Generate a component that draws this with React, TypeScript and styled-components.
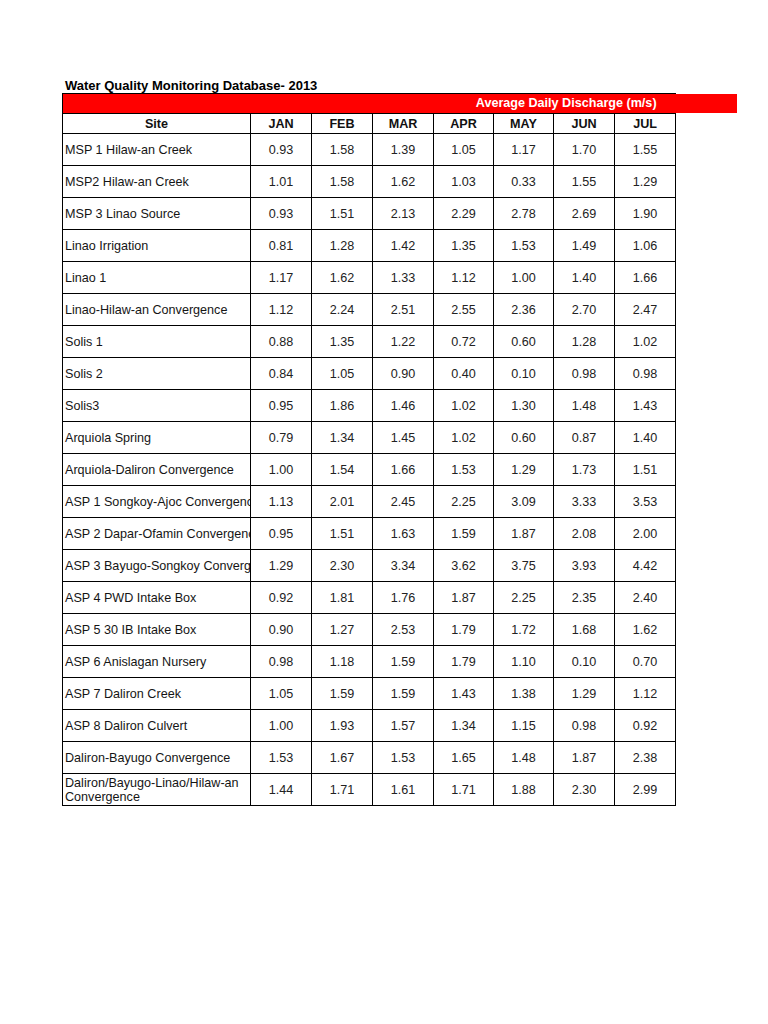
import styled, { createGlobalStyle } from "styled-components";

const GlobalStyle = createGlobalStyle`
  html, body {
    margin: 0;
    padding: 0;
    background: #ffffff;
  }
  body {
    font-family: "Liberation Sans", Arial, sans-serif;
    color: #000;
  }
`;

const months = ["JAN", "FEB", "MAR", "APR", "MAY", "JUN", "JUL"];

const rows: [string, string[]][] = [
  ["MSP 1 Hilaw-an Creek", ["0.93", "1.58", "1.39", "1.05", "1.17", "1.70", "1.55"]],
  ["MSP2 Hilaw-an Creek", ["1.01", "1.58", "1.62", "1.03", "0.33", "1.55", "1.29"]],
  ["MSP 3 Linao Source", ["0.93", "1.51", "2.13", "2.29", "2.78", "2.69", "1.90"]],
  ["Linao Irrigation", ["0.81", "1.28", "1.42", "1.35", "1.53", "1.49", "1.06"]],
  ["Linao 1", ["1.17", "1.62", "1.33", "1.12", "1.00", "1.40", "1.66"]],
  ["Linao-Hilaw-an Convergence", ["1.12", "2.24", "2.51", "2.55", "2.36", "2.70", "2.47"]],
  ["Solis 1", ["0.88", "1.35", "1.22", "0.72", "0.60", "1.28", "1.02"]],
  ["Solis 2", ["0.84", "1.05", "0.90", "0.40", "0.10", "0.98", "0.98"]],
  ["Solis3", ["0.95", "1.86", "1.46", "1.02", "1.30", "1.48", "1.43"]],
  ["Arquiola Spring", ["0.79", "1.34", "1.45", "1.02", "0.60", "0.87", "1.40"]],
  ["Arquiola-Daliron Convergence", ["1.00", "1.54", "1.66", "1.53", "1.29", "1.73", "1.51"]],
  ["ASP 1 Songkoy-Ajoc Convergence", ["1.13", "2.01", "2.45", "2.25", "3.09", "3.33", "3.53"]],
  ["ASP 2 Dapar-Ofamin Convergence", ["0.95", "1.51", "1.63", "1.59", "1.87", "2.08", "2.00"]],
  ["ASP 3 Bayugo-Songkoy Convergence", ["1.29", "2.30", "3.34", "3.62", "3.75", "3.93", "4.42"]],
  ["ASP 4 PWD Intake Box", ["0.92", "1.81", "1.76", "1.87", "2.25", "2.35", "2.40"]],
  ["ASP 5 30 IB Intake Box", ["0.90", "1.27", "2.53", "1.79", "1.72", "1.68", "1.62"]],
  ["ASP 6 Anislagan Nursery", ["0.98", "1.18", "1.59", "1.79", "1.10", "0.10", "0.70"]],
  ["ASP 7 Daliron Creek", ["1.05", "1.59", "1.59", "1.43", "1.38", "1.29", "1.12"]],
  ["ASP 8 Daliron Culvert", ["1.00", "1.93", "1.57", "1.34", "1.15", "0.98", "0.92"]],
  ["Daliron-Bayugo Convergence", ["1.53", "1.67", "1.53", "1.65", "1.48", "1.87", "2.38"]],
  ["Daliron/Bayugo-Linao/Hilaw-an Convergence", ["1.44", "1.71", "1.61", "1.71", "1.88", "2.30", "2.99"]],
];

const Page = styled.div`
  padding: 79px 0 0 62px;
`;

const Title = styled.div`
  font-weight: bold;
  font-size: 13px;
  line-height: 14px;
  height: 14px;
  padding-left: 3px;
  white-space: nowrap;
`;

const Sheet = styled.div`
  display: flex;
  align-items: flex-start;
`;

const Overflow = styled.div`
  width: 61px;
  height: 19px;
  margin-top: 1px;
  background: #ff0000;
`;

const Table = styled.table`
  border-collapse: collapse;
  table-layout: fixed;
  width: 613px;
`;

const Col = styled.col<{ $w: number }>`
  width: ${(p) => p.$w}px;
`;

const BandCell = styled.td`
  background: #ff0000;
  color: #ffffff;
  font-weight: bold;
  font-size: 12.6px;
  height: 19px;
  padding: 0 19px 0 0;
  text-align: right;
  border-top: 1px solid #000;
  border-left: 1px solid #000;
  line-height: 19px;
`;

const HeadCell = styled.th`
  height: 19px;
  padding: 0;
  border: 1px solid #000;
  font-size: 12.6px;
  font-weight: bold;
  text-align: center;
  vertical-align: middle;
  line-height: 14px;
  color: #111;
`;

const SiteCell = styled.td<{ $wrap?: boolean }>`
  height: 31px;
  padding: 0 0 0 2px;
  border: 1px solid #000;
  font-size: 12.6px;
  line-height: 14px;
  color: #151515;
  vertical-align: middle;
  white-space: ${(p) => (p.$wrap ? "normal" : "nowrap")};
  overflow: hidden;
  text-overflow: clip;
`;

const NumCell = styled.td`
  height: 31px;
  padding: 0;
  border: 1px solid #000;
  font-size: 12.6px;
  color: #222;
  text-align: center;
  vertical-align: middle;
`;

const colWidths = [188, 61, 61, 61, 60, 60, 61, 61];

export default function App() {
  return (
    <Page>
      <GlobalStyle />
      <Title>Water Quality Monitoring Database- 2013</Title>
      <Sheet>
        <Table>
          <colgroup>
            {colWidths.map((w, i) => (
              <Col key={i} $w={w} />
            ))}
          </colgroup>
          <thead>
            <tr>
              <BandCell colSpan={8}>Average Daily Discharge (m/s)</BandCell>
            </tr>
            <tr>
              <HeadCell>Site</HeadCell>
              {months.map((m) => (
                <HeadCell key={m}>{m}</HeadCell>
              ))}
            </tr>
          </thead>
          <tbody>
            {rows.map(([site, values], i) => (
              <tr key={site}>
                <SiteCell $wrap={i === rows.length - 1}>{site}</SiteCell>
                {values.map((v, j) => (
                  <NumCell key={j}>{v}</NumCell>
                ))}
              </tr>
            ))}
          </tbody>
        </Table>
        <Overflow />
      </Sheet>
    </Page>
  );
}
